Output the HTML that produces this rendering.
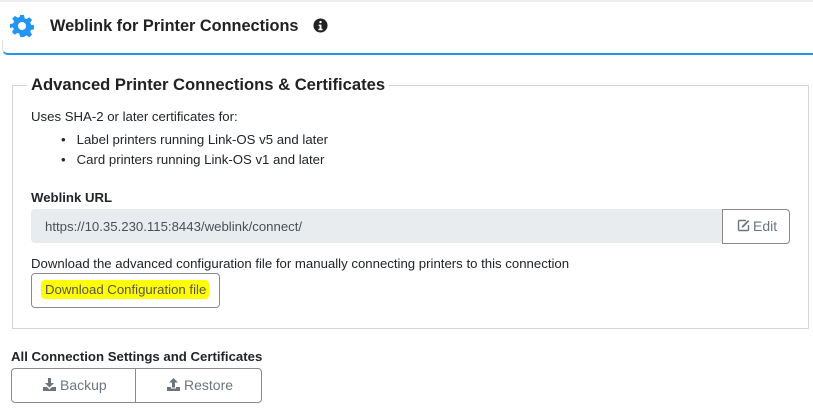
<!DOCTYPE html>
<html><head><style>
body{margin:0;width:813px;height:418px;background:#fff;font-family:"Liberation Sans",sans-serif;color:#212529;position:relative;overflow:hidden}
.a{position:absolute;white-space:nowrap}
.t13{font-size:13.2px}
</style></head><body>
<div class="a" style="left:0;top:0;width:813px;height:2px;background:#eee"></div>
<div class="a" style="left:2px;top:40px;width:811px;height:13px;border-bottom:2px solid #2196f3;border-left:1px solid #e0e0e0;border-bottom-left-radius:6px"></div>
<svg class="a" style="left:10px;top:14px" width="24" height="24" viewBox="0 0 24 24"><path fill="#2196f3" d="M10 1h4l.6 3.2 2 .9 2.7-1.9 2.8 2.8-1.9 2.7.9 2 3.2.6v4l-3.2.6-.9 2 1.9 2.7-2.8 2.8-2.7-1.9-2 .9L14 23h-4l-.6-3.2-2-.9-2.7 1.9-2.8-2.8 1.9-2.7-.9-2L0 14v-4l3.2-.6.9-2L2.2 4.7 5 1.9l2.7 1.9 2-.9z"/><circle cx="12" cy="12" r="4" fill="#fff"/></svg>
<div class="a" style="left:50px;top:17px;font-size:16.3px;font-weight:bold;color:#222">Weblink for Printer Connections</div>
<svg class="a" style="left:313px;top:18px" width="15" height="15" viewBox="0 0 16 16"><circle cx="8" cy="8" r="7.5" fill="#222"/><circle cx="8" cy="4.3" r="1.3" fill="#fff"/><path d="M6 7h3v4.5h1.2V13H5.8v-1.5H7V8.5H6z" fill="#fff"/></svg>
<div class="a" style="left:12px;top:85px;width:795px;height:242px;border:1px solid #d6d6d6"></div>
<div class="a" style="left:27px;top:75px;padding:0 4px;background:#fff;font-size:16.6px;font-weight:bold;color:#222">Advanced Printer Connections &amp; Certificates</div>
<div class="a t13" style="left:31px;top:109px">Uses SHA-2 or later certificates for:</div>
<div class="a t13" style="left:61px;top:132px">•&nbsp;&nbsp;&nbsp;Label printers running Link-OS v5 and later</div>
<div class="a t13" style="left:61px;top:152px">•&nbsp;&nbsp;&nbsp;Card printers running Link-OS v1 and later</div>
<div class="a t13" style="left:31px;top:190px;font-weight:bold">Weblink URL</div>
<div class="a" style="left:31px;top:209px;width:691px;height:34px;background:#e9ecef;border-radius:4px 0 0 4px"></div>
<div class="a" style="left:45px;top:219px;color:#495057;font-size:13.2px">https://10.35.230.115:8443/weblink/connect/</div>
<div class="a" style="left:722px;top:209px;width:66px;height:33px;border:1px solid #8a8a8a;border-radius:0 4px 4px 0;background:#fff"></div>
<svg class="a" style="left:737px;top:219px" width="13" height="13" viewBox="0 0 13 13"><path d="M9 1.5H2.5a1 1 0 0 0-1 1v8a1 1 0 0 0 1 1h8a1 1 0 0 0 1-1V6" fill="none" stroke="#6c757d" stroke-width="1.4"/><path d="M11 1l1.3 1.3-6 6-1.8.5.5-1.8z" fill="#6c757d"/></svg>
<div class="a" style="left:753px;top:218px;color:#6c757d;font-size:14px">Edit</div>
<div class="a t13" style="left:31px;top:256px">Download the advanced configuration file for manually connecting printers to this connection</div>
<div class="a" style="left:31px;top:273px;width:187px;height:33px;border:1px solid #8a8a8a;border-radius:4px"></div>
<div class="a" style="left:41px;top:280px;width:168px;height:19px;background:#ffff00;border-radius:4px"></div>
<div class="a" style="left:45px;top:282px;color:#555;font-size:13.2px">Download Configuration file</div>
<div class="a t13" style="left:11px;top:349px;font-weight:bold">All Connection Settings and Certificates</div>
<div class="a" style="left:11px;top:368px;width:249px;height:33px;border:1px solid #8a8a8a;border-radius:4px"></div>
<div class="a" style="left:135px;top:368px;width:1px;height:35px;background:#8a8a8a"></div>
<svg class="a" style="left:43px;top:378px" width="13" height="13" viewBox="0 0 13 13"><path d="M5 0h3v5h3L6.5 9.5 2 5h3z M0 9h4l2.5 2.5L9 9h4v4H0z" fill="#6c757d"/></svg>
<div class="a" style="left:60px;top:377px;color:#6c757d;font-size:14px">Backup</div>
<svg class="a" style="left:167px;top:378px" width="13" height="13" viewBox="0 0 13 13"><path d="M5 9.5h3v-5h3L6.5 0 2 4.5h3z M0 9h4v1.5h5V9h4v4H0z" fill="#6c757d"/></svg>
<div class="a" style="left:184px;top:377px;color:#6c757d;font-size:14px">Restore</div>
</body></html>
